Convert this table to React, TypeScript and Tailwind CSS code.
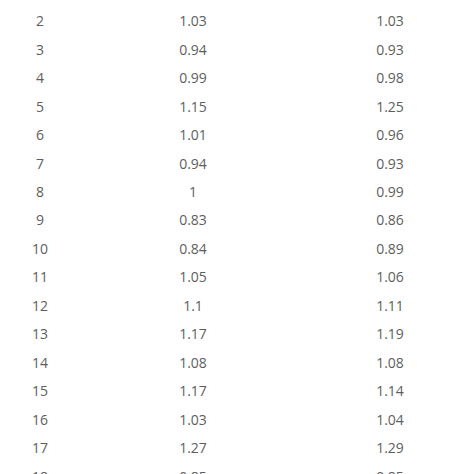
import React from 'react';

const rows: [string, string, string][] = [
  ['2', '1.03', '1.03'],
  ['3', '0.94', '0.93'],
  ['4', '0.99', '0.98'],
  ['5', '1.15', '1.25'],
  ['6', '1.01', '0.96'],
  ['7', '0.94', '0.93'],
  ['8', '1', '0.99'],
  ['9', '0.83', '0.86'],
  ['10', '0.84', '0.89'],
  ['11', '1.05', '1.06'],
  ['12', '1.1', '1.11'],
  ['13', '1.17', '1.19'],
  ['14', '1.08', '1.08'],
  ['15', '1.17', '1.14'],
  ['16', '1.03', '1.04'],
  ['17', '1.27', '1.29'],
  ['18', '0.85', '0.85'],
];

const App: React.FC = () => {
  return (
    <div className="w-[474px] h-[474px] overflow-hidden bg-white pt-[7.2px] font-['Open_Sans',sans-serif] text-[14px] text-[#5e5e5e]">
      {rows.map(([id, a, b]) => (
        <div key={id} className="flex h-[28.47px] leading-[28.47px]">
          <div className="w-[80px] text-center">{id}</div>
          <div className="w-[226px] text-center">{a}</div>
          <div className="w-[168px] text-center">{b}</div>
        </div>
      ))}
    </div>
  );
};

export default App;
